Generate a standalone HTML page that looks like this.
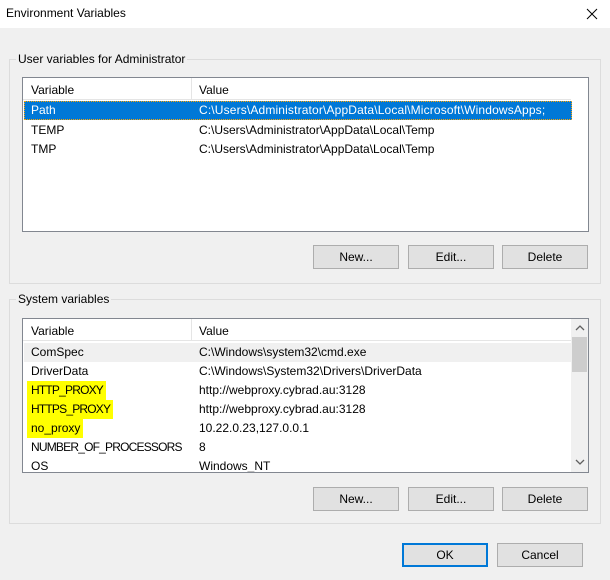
<!DOCTYPE html>
<html><head><style>
*{box-sizing:border-box;margin:0;padding:0}
body{width:610px;height:580px;background:#f0f0f0;font-family:"Liberation Sans",sans-serif;font-size:12px;color:#000;position:relative;overflow:hidden}
.a{position:absolute}
.title{left:0;top:0;width:610px;height:28px;background:#fff}
.grp{border:1px solid #dcdcdc}
.lbl{background:#f0f0f0;padding:0 2px;white-space:nowrap}
.list{background:#fff;border:1px solid #828790}
.hdr{height:22px;border-bottom:1px solid #e5e5e5;}
.row{position:absolute;left:1px;height:19px;line-height:19px;white-space:nowrap}
.c1{position:absolute;left:7px}
.c2{position:absolute;left:175px}
.u{letter-spacing:-0.8px}
.btn{background:#e1e1e1;border:1px solid #adadad;text-align:center;line-height:22px;width:86px;height:24px}
.hl{background:#ffff00;margin-left:-4px;padding:0 3px 0 4px}
</style></head><body>
<div class="a title"></div>
<div class="a" style="left:6px;top:6px;font-size:12px">Environment Variables</div>
<svg class="a" style="left:586px;top:8px" width="12" height="12"><path d="M1 1L11 11M11 1L1 11" stroke="#000" stroke-width="1"/></svg>

<div class="a grp" style="left:9px;top:59px;width:592px;height:225px"></div>
<div class="a lbl" style="left:16px;top:52px">User variables for Administrator</div>
<div class="a list" style="left:22px;top:77px;width:567px;height:155px">
 <div class="a hdr" style="left:0;top:0;width:548px"></div>
 <div class="a" style="left:168px;top:0;width:1px;height:22px;background:#e5e5e5"></div>
 <div class="row" style="top:3px;width:548px"><span class="c1">Variable</span><span class="c2">Value</span></div>
 <div class="row" style="top:23px;width:548px;background:#0078d7;color:#fff;outline:1px dotted #ffa500;outline-offset:-1px"><span class="c1">Path</span><span class="c2" style="letter-spacing:0.15px">C:\Users\Administrator\AppData\Local\Microsoft\WindowsApps;</span></div>
 <div class="row" style="top:43px"><span class="c1">TEMP</span><span class="c2">C:\Users\Administrator\AppData\Local\Temp</span></div>
 <div class="row" style="top:62px"><span class="c1">TMP</span><span class="c2">C:\Users\Administrator\AppData\Local\Temp</span></div>
</div>
<div class="a btn" style="left:313px;top:245px">New...</div>
<div class="a btn" style="left:408px;top:245px">Edit...</div>
<div class="a btn" style="left:502px;top:245px">Delete</div>

<div class="a grp" style="left:9px;top:299px;width:592px;height:225px"></div>
<div class="a lbl" style="left:16px;top:292px">System variables</div>
<div class="a list" style="left:22px;top:318px;width:567px;height:155px;overflow:hidden">
 <div class="a hdr" style="left:0;top:0;width:548px"></div>
 <div class="a" style="left:168px;top:0;width:1px;height:22px;background:#e5e5e5"></div>
 <div class="row" style="top:3px;width:548px"><span class="c1">Variable</span><span class="c2">Value</span></div>
 <div class="row" style="top:24px;width:548px;background:#f0f0f0"><span class="c1">ComSpec</span><span class="c2">C:\Windows\system32\cmd.exe</span></div>
 <div class="row" style="top:43px"><span class="c1">DriverData</span><span class="c2">C:\Windows\System32\Drivers\DriverData</span></div>
 <div class="row" style="top:62px"><span class="c1 hl u">HTTP_PROXY</span><span class="c2">http://webproxy.cybrad.au:3128</span></div>
 <div class="row" style="top:81px"><span class="c1 hl u">HTTPS_PROXY</span><span class="c2">http://webproxy.cybrad.au:3128</span></div>
 <div class="row" style="top:100px"><span class="c1 hl">no_proxy</span><span class="c2">10.22.0.23,127.0.0.1</span></div>
 <div class="row" style="top:119px"><span class="c1 u">NUMBER_OF_PROCESSORS</span><span class="c2">8</span></div>
 <div class="row" style="top:138px"><span class="c1">OS</span><span class="c2">Windows_NT</span></div>
 <div class="a" style="left:548px;top:0;width:17px;height:153px;background:#f0f0f0"></div>
 <div class="a" style="left:549px;top:18px;width:15px;height:35px;background:#cdcdcd"></div>
 <svg class="a" style="left:552px;top:5px" width="10" height="8"><path d="M1 6L5 2L9 6" stroke="#606060" fill="none" stroke-width="1.3"/></svg>
 <svg class="a" style="left:552px;top:139px" width="10" height="8"><path d="M1 2L5 6L9 2" stroke="#606060" fill="none" stroke-width="1.3"/></svg>
</div>
<div class="a btn" style="left:313px;top:487px">New...</div>
<div class="a btn" style="left:408px;top:487px">Edit...</div>
<div class="a btn" style="left:502px;top:487px">Delete</div>

<div class="a btn" style="left:402px;top:543px;border:2px solid #0078d7;line-height:20px">OK</div>
<div class="a btn" style="left:497px;top:543px">Cancel</div>
</body></html>
